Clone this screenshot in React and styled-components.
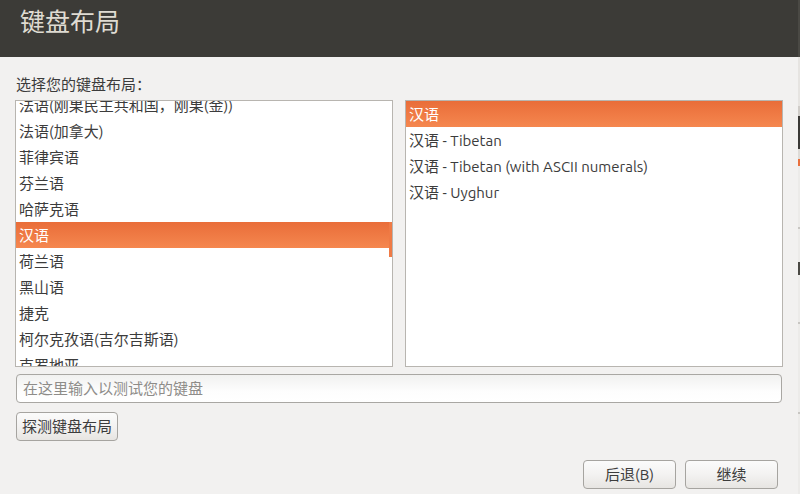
import React from "react";
import styled, { createGlobalStyle } from "styled-components";

const Global = createGlobalStyle`
  html, body { margin: 0; padding: 0; background: #f2f1f0; }
  body { width: 800px; height: 494px; overflow: hidden; }
  * { box-sizing: border-box; }
`;

const FONT = `"Ubuntu", "Noto Sans", "Noto Sans CJK SC", sans-serif`;

const Screen = styled.div`
  display: flex;
  width: 800px;
  height: 494px;
  font-family: ${FONT};
  font-size: 15px;
  color: #3c3c3c;
`;

const Window = styled.div`
  width: 798px;
  height: 494px;
  display: flex;
  flex-direction: column;
  background: #f2f1f0;
`;

const EdgeStrip = styled.div`
  width: 2px;
  height: 494px;
  background: linear-gradient(
    to bottom,
    #4a4944 0px, #4a4944 57px,
    #e6e4e1 57px, #e6e4e1 106px,
    #cfccc8 106px, #cfccc8 116px,
    #3a3936 116px, #3a3936 149px,
    #dedbd7 149px, #dedbd7 159px,
    #e9703d 159px, #e9703d 166px,
    #ecebe9 166px, #ecebe9 227px,
    #c8c6c2 227px, #c8c6c2 229px,
    #ecebe9 229px, #ecebe9 262px,
    #4a4944 262px, #4a4944 275px,
    #ecebe9 275px, #ecebe9 322px,
    #c8c6c2 322px, #c8c6c2 324px,
    #ecebe9 324px, #ecebe9 412px,
    #c8c6c2 412px, #c8c6c2 414px,
    #ecebe9 414px
  );
`;

const Header = styled.header`
  height: 57px;
  background: #3c3b37;
  padding: 7px 0 0 20px;
`;

const Title = styled.h1`
  margin: 0;
  font-family: ${FONT};
  font-weight: 400;
  font-size: 25px;
  line-height: 30px;
  color: #dfdbd2;
`;

const Body = styled.main`
  flex: 1;
  display: flex;
  flex-direction: column;
  padding: 18px 15px 5px 15px;
`;

const Label = styled.div`
  font-size: 15px;
  line-height: 20px;
  padding-left: 1px;
  margin-bottom: 5px;
  color: #3c3c3c;
`;

const Lists = styled.div`
  display: grid;
  grid-template-columns: 378px 378px;
  column-gap: 12px;
  height: 267px;
`;

const ListBox = styled.div`
  position: relative;
  border: 1px solid #b8b5b0;
  background: #ffffff;
  overflow: hidden;
`;

const ListInner = styled.div`
  margin-top: ${(p) => p.$offset || 0}px;
`;

const Row = styled.div`
  height: 26px;
  line-height: 26px;
  padding: 1px 0 0 3px;
  white-space: nowrap;
  color: ${(p) => (p.$selected ? "#ffffff" : "#3c3c3c")};
  background: ${(p) =>
    p.$selected ? "linear-gradient(to bottom, #e96d39, #f5874f)" : "transparent"};
`;

const ScrollThumb = styled.div`
  position: absolute;
  right: 0;
  width: 3px;
  background: #ef7a45;
`;

const TestInput = styled.input`
  margin: 7px 1px 0 1px;
  height: 29px;
  border: 1px solid #a9a7a3;
  border-radius: 4px;
  background: linear-gradient(to bottom, #f1f1f0, #fdfdfd 60%, #ffffff);
  padding: 0 6px;
  font-family: ${FONT};
  font-size: 15px;
  color: #3c3c3c;
  outline: none;
  &::placeholder { color: #8e8c89; }
`;

const ButtonRow = styled.div`
  display: flex;
  justify-content: ${(p) => p.$align || "flex-start"};
  gap: 9px;
  margin-top: ${(p) => p.$top || 0}px;
  padding: 0 5px 0 1px;
`;

const Button = styled.button`
  height: 29px;
  min-width: ${(p) => p.$w || 0}px;
  padding: 0 5px;
  border: 1px solid #a6a4a0;
  border-radius: 4px;
  background: linear-gradient(to bottom, #fbfbfb, #f3f2f1 50%, #e7e5e2);
  font-family: ${FONT};
  font-size: 15px;
  color: #3c3c3c;
  line-height: 27px;
`;

const leftItems = [
  "法语(刚果民主共和国，刚果(金))",
  "法语(加拿大)",
  "菲律宾语",
  "芬兰语",
  "哈萨克语",
  "汉语",
  "荷兰语",
  "黑山语",
  "捷克",
  "柯尔克孜语(吉尔吉斯语)",
  "克罗地亚",
];

const rightItems = [
  "汉语",
  "汉语 - Tibetan",
  "汉语 - Tibetan (with ASCII numerals)",
  "汉语 - Uyghur",
];

export default function App() {
  return (
    <>
      <Global />
      <Screen>
        <Window>
          <Header>
            <Title>键盘布局</Title>
          </Header>
          <Body>
            <Label>选择您的键盘布局：</Label>
            <Lists>
              <ListBox>
                <ListInner $offset={-9}>
                  {leftItems.map((t) => (
                    <Row key={t} $selected={t === "汉语"}>
                      {t}
                    </Row>
                  ))}
                </ListInner>
                <ScrollThumb style={{ top: 121, height: 35 }} />
              </ListBox>
              <ListBox>
                <ListInner>
                  {rightItems.map((t, i) => (
                    <Row key={t} $selected={i === 0}>
                      {t}
                    </Row>
                  ))}
                </ListInner>
              </ListBox>
            </Lists>
            <TestInput placeholder="在这里输入以测试您的键盘" />
            <ButtonRow $top={9}>
              <Button>探测键盘布局</Button>
            </ButtonRow>
            <ButtonRow $align="flex-end" $top={19}>
              <Button $w={93}>后退(B)</Button>
              <Button $w={93}>继续</Button>
            </ButtonRow>
          </Body>
        </Window>
        <EdgeStrip />
      </Screen>
    </>
  );
}
